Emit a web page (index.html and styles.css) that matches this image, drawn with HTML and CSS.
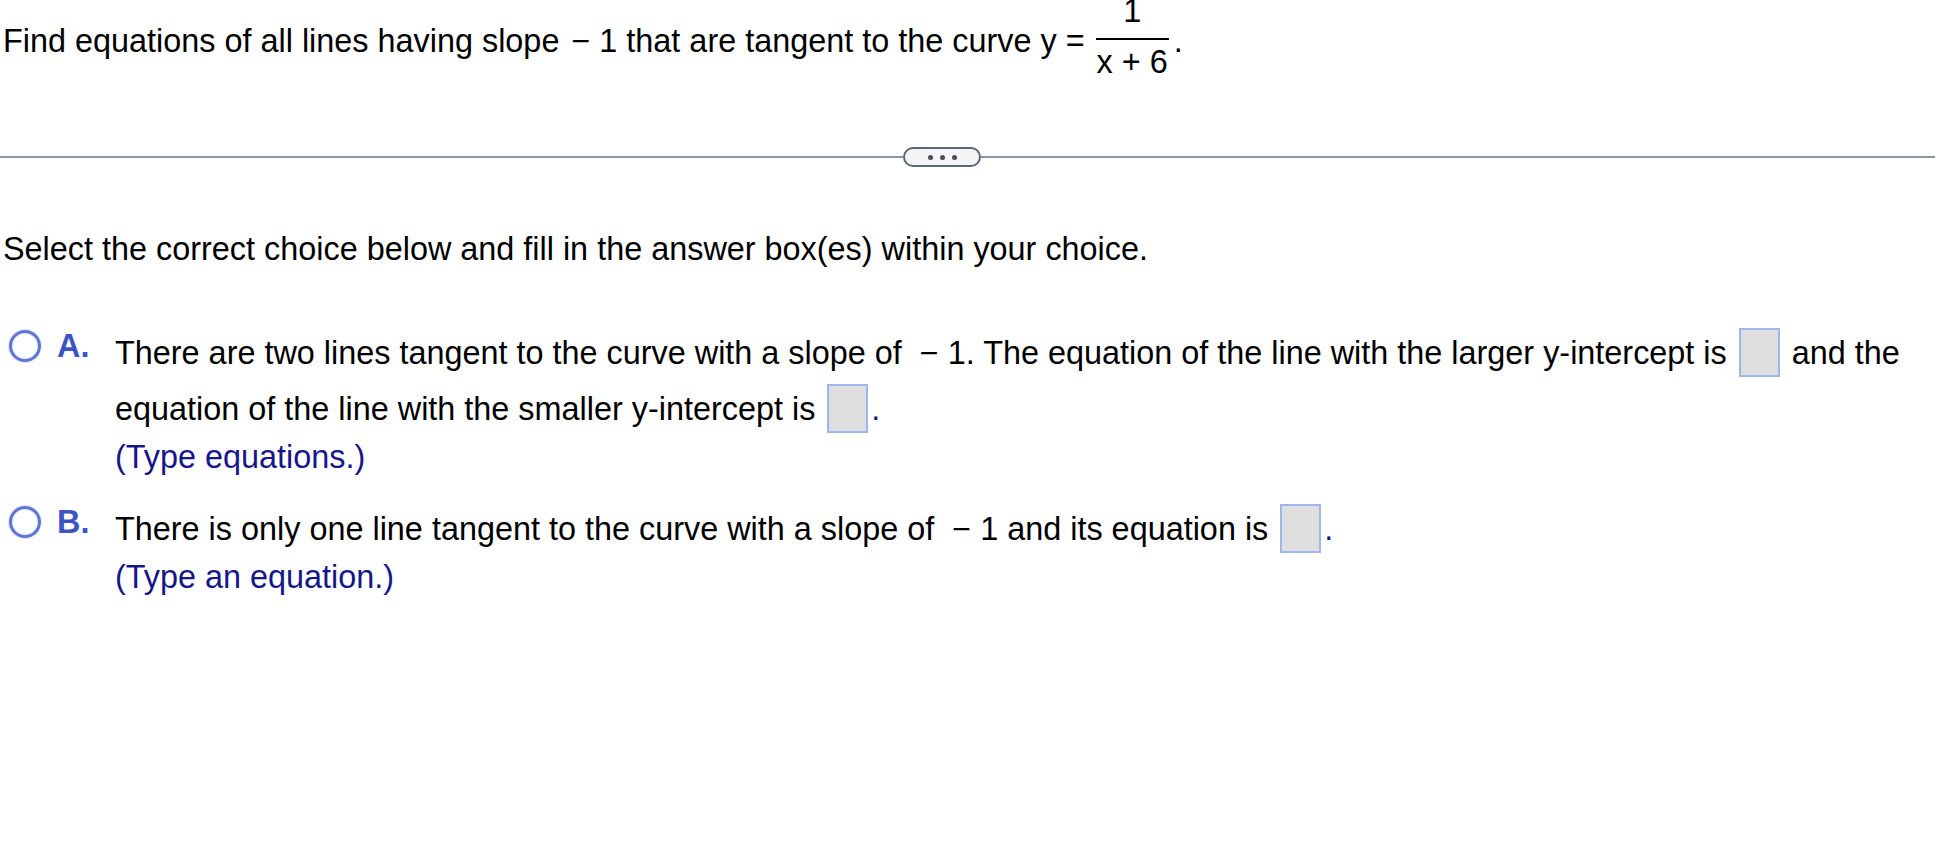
FILE: index.html
```html
<!DOCTYPE html>
<html lang="en">
<head>
<meta charset="utf-8">
<title>Tangent lines</title>
<link rel="stylesheet" href="styles.css">
</head>
<body>
<div class="question">Find equations of all lines having slope <span class="neg">− 1</span> that are tangent to the curve y = <span class="frac"><span class="num">1</span><span class="den">x + 6</span></span>.</div>

<div class="divider"><span class="rule rule-left"></span><span class="pill"><i></i><i></i><i></i></span><span class="rule rule-right"></span></div>

<p class="instructions">Select the correct choice below and fill in the answer box(es) within your choice.</p>

<div class="choices">
  <div class="choice">
    <span class="radio"></span>
    <span class="label">A.</span>
    <div class="choice-text">There are two lines tangent to the curve with a slope of&nbsp; − 1. The equation of the line with the larger y-intercept is <span class="ansbox"></span> and the equation of the line with the smaller y-intercept is <span class="ansbox"></span><span class="hint">.</span><br><span class="hint">(Type equations.)</span></div>
  </div>
  <div class="choice">
    <span class="radio"></span>
    <span class="label">B.</span>
    <div class="choice-text">There is only one line tangent to the curve with a slope of&nbsp; − 1 and its equation is <span class="ansbox"></span><span class="hint">.</span><br><span class="hint">(Type an equation.)</span></div>
  </div>
</div>
</body>
</html>
```

FILE: styles.css
```css
html, body {
  margin: 0;
  padding: 0;
  background: #ffffff;
}

body {
  font-family: "Liberation Sans", Arial, sans-serif;
  font-size: 32.4px;
  color: #000000;
}

.question {
  padding-left: 3px;
  line-height: normal;
  white-space: nowrap;
}

.neg {
  margin-left: 3px;
}

.frac {
  display: inline-block;
  vertical-align: -21px;
  text-align: center;
  margin: 0 5px 0 2px;
}

.num {
  display: block;
  line-height: 22px;
  padding-bottom: 16px;
}

.den {
  display: block;
  line-height: 44px;
  border-top: 2px solid #000000;
  padding: 0 1px;
}

.divider {
  display: flex;
  align-items: center;
  height: 20px;
  margin-top: 63px;
}

.rule {
  height: 2px;
  background: #8b95a1;
}

.rule-left {
  width: 903px;
  flex: none;
}

.rule-right {
  flex: 1;
}

.pill {
  box-sizing: border-box;
  flex: none;
  width: 78px;
  height: 20px;
  border: 2px solid #5b6877;
  border-radius: 10px;
  background: #f4f5f7;
  display: flex;
  justify-content: center;
  align-items: center;
  gap: 7px;
}

.pill i {
  width: 5px;
  height: 5px;
  border-radius: 50%;
  background: #474d55;
}

.instructions {
  margin: 64px 0 0;
  padding-left: 3px;
  line-height: normal;
}

.choices {
  margin-top: 53px;
}

.choice {
  display: flex;
  align-items: flex-start;
  padding-left: 9px;
}

.choice + .choice {
  margin-top: 16px;
}

.radio {
  box-sizing: border-box;
  flex: none;
  width: 32px;
  height: 32px;
  margin-top: 9px;
  border-radius: 50%;
  border: 3px solid #5d76d6;
  box-shadow: 0 0 2px rgba(93, 118, 214, 0.6), inset 0 0 2px rgba(93, 118, 214, 0.5);
}

.label {
  flex: none;
  width: 58px;
  margin-left: 16px;
  margin-top: 7px;
  font-weight: bold;
  color: #3d53c4;
  line-height: 36px;
}

.choice-text {
  flex: 1;
  line-height: 48px;
}

.ansbox {
  display: inline-block;
  box-sizing: border-box;
  width: 41px;
  height: 49px;
  margin: 7px 3px 0;
  border: 2px solid #9fb6ea;
  background: #dedede;
  vertical-align: -13px;
}

.hint {
  color: #16168a;
}
```
